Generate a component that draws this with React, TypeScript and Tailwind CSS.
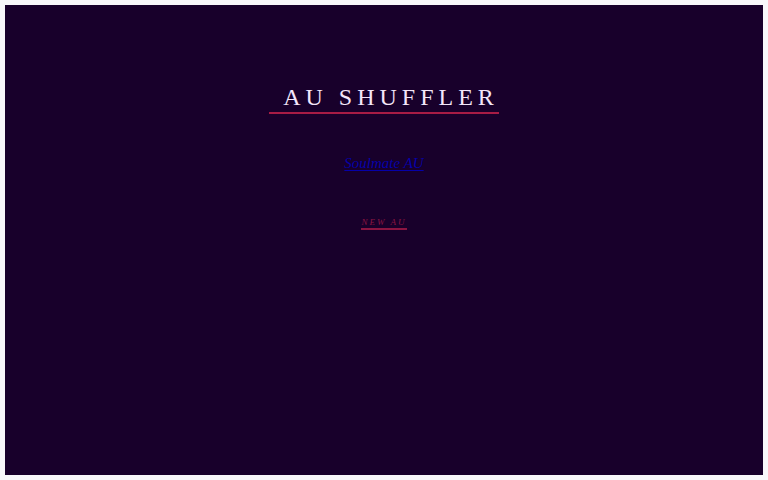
import React from 'react';

const App = () => {
  return (
    <div className="flex min-h-screen bg-[#f8f8fa] p-[5px] font-['Liberation_Serif',serif]">
      <main className="flex flex-1 flex-col items-center bg-[#18002b] pt-20">
        <Title text="AU SHUFFLER" />
        <AuLink href="#soulmate" text="Soulmate AU" />
        <ShuffleButton text="NEW AU" />
      </main>
    </div>
  );
};

const Title = ({ text }: { text: string }) => (
  <h1 className="border-b-2 border-[#a71c45] pb-0.5 pl-3.5 text-2xl leading-[25px] tracking-[5px] text-[#f3e6fa]">
    {text}
  </h1>
);

const AuLink = ({ href, text }: { href: string; text: string }) => (
  <a
    href={href}
    className="mt-[39px] text-[15px] leading-5 italic text-[#0600a8] underline decoration-1 underline-offset-2 [text-decoration-skip-ink:none]"
  >
    {text}
  </a>
);

const ShuffleButton = ({ text }: { text: string }) => (
  <button
    type="button"
    className="mt-11 cursor-pointer border-b-2 border-[#8b1542] text-[9px] leading-[11px] tracking-[2px] italic text-[#8b1542]"
  >
    {text}
  </button>
);

export default App;
